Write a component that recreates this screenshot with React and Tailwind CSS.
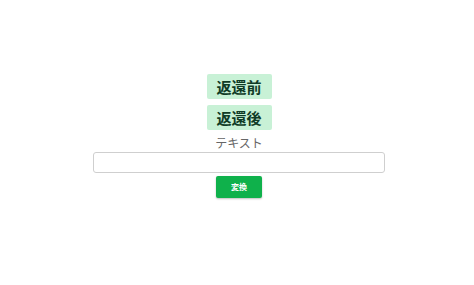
import React, { useState } from "react";

const font = { fontFamily: '"Noto Sans CJK JP", "Noto Sans", sans-serif' };

export default function App() {
  const [text, setText] = useState("");

  return (
    <div
      className="w-[474px] h-[285px] bg-white flex flex-col items-center pt-[74px] pl-[4px]"
      style={font}
    >
      {/* Result badges */}
      <div className="h-[25px] w-[65px] flex items-center justify-center rounded-[2px] bg-[#c8f1d6] text-[15px] font-bold text-[#0f3b26] leading-none">
        返還前
      </div>
      <div className="mt-[6px] h-[25px] w-[65px] flex items-center justify-center rounded-[2px] bg-[#c8f1d6] text-[15px] font-bold text-[#0f3b26] leading-none">
        返還後
      </div>

      {/* Input */}
      <label className="mt-[5px] text-[12px] leading-[16px] text-[#666666]">
        テキスト
      </label>
      <input
        value={text}
        onChange={(e) => setText(e.target.value)}
        className="mt-[1px] w-[292px] h-[21px] rounded-[3px] border border-[#cfcfcf] bg-white px-2 text-[12px] outline-none"
      />

      <button className="mt-[3px] w-[46px] h-[22px] rounded-[2px] bg-[#0fb14b] text-white text-[8px] font-bold shadow-[0_1px_2px_rgba(0,0,0,0.25)]">
        変換
      </button>
    </div>
  );
}
